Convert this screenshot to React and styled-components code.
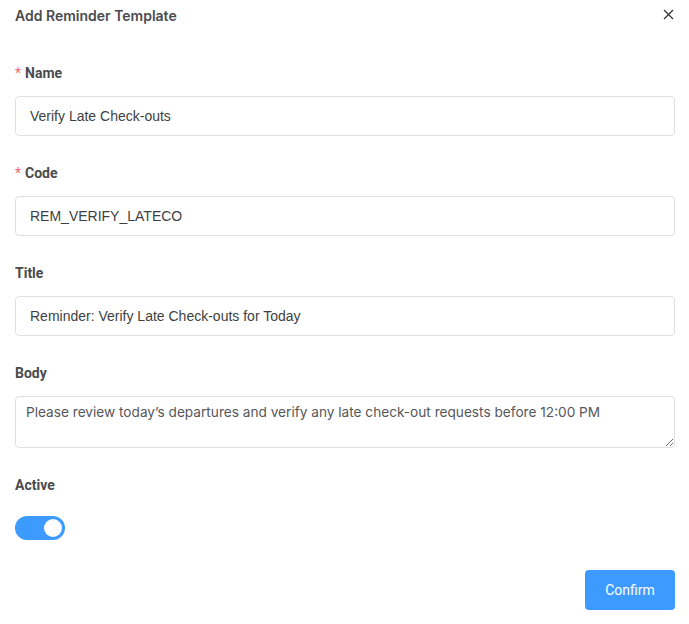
import React, { useState } from 'react'
import styled, { createGlobalStyle } from 'styled-components'

const GlobalStyle = createGlobalStyle`
  html, body {
    margin: 0;
    padding: 0;
    background: #fff;
  }
  body {
    font-family: Roboto, "Liberation Sans", Arial, sans-serif;
  }
`

const Dialog = styled.div`
  width: 689px;
  height: 624px;
  background: #fff;
  box-sizing: border-box;
`

const Header = styled.div`
  display: flex;
  align-items: center;
  justify-content: space-between;
  height: 31px;
  padding: 0 15px;
`

const Title = styled.span`
  font-family: Inter, "Liberation Sans", sans-serif;
  font-size: 14px;
  font-weight: 600;
  color: #4a4b4f;
`

const CloseBtn = styled.button`
  border: none;
  background: none;
  padding: 0;
  width: 16px;
  height: 16px;
  display: flex;
  align-items: center;
  justify-content: center;
  margin-right: -2px;
  margin-top: -3px;
  cursor: pointer;
`

const Body = styled.div`
  padding: 31px 14px 0 15px;
`

const Item = styled.div`
  margin-bottom: ${p => (p.$last ? '0' : '26px')};
`

const Label = styled.label`
  display: block;
  line-height: 22px;
  margin-bottom: 12px;
  font-size: 14px;
  font-weight: 700;
  color: #4a4b4d;
`

const Star = styled.span`
  color: #f56c6c;
  margin-right: 4px;
  font-weight: 400;
`

const Input = styled.input`
  display: block;
  width: 100%;
  box-sizing: border-box;
  height: 40px;
  padding: 0 14px;
  border: 1px solid #dcdfe6;
  border-radius: 4px;
  font-family: "Liberation Sans", Arial, sans-serif;
  font-size: 14px;
  color: #3d3f42;
  outline: none;
`

const TextArea = styled.textarea`
  display: block;
  width: 100%;
  box-sizing: border-box;
  height: 52px;
  padding: 5px 10px;
  border: 1px solid #dcdfe6;
  border-radius: 4px;
  font-family: Inter, "Liberation Sans", sans-serif;
  font-size: 13.65px;
  line-height: 20px;
  color: #55575b;
  resize: vertical;
  outline: none;
`

const SwitchRow = styled.div`
  height: 40px;
  display: flex;
  align-items: center;
`

const Switch = styled.button`
  position: relative;
  width: 50px;
  height: 24px;
  border-radius: 12px;
  border: none;
  padding: 0;
  background: ${p => (p.$on ? '#3d9bff' : '#dcdfe6')};
  cursor: pointer;
`

const Knob = styled.span`
  position: absolute;
  top: 3px;
  left: ${p => (p.$on ? '29px' : '3px')};
  width: 18px;
  height: 18px;
  border-radius: 50%;
  background: #fff;
`

const Footer = styled.div`
  display: flex;
  justify-content: flex-end;
  padding: 22px 14px 0 15px;
`

const Button = styled.button`
  width: 90px;
  height: 40px;
  border: none;
  border-radius: 4px;
  background: #3d9bff;
  color: #fff;
  font-family: Roboto, "Liberation Sans", Arial, sans-serif;
  font-size: 14px;
  cursor: pointer;
`

const Field = ({ label, required, last, children }) => (
  <Item $last={last}>
    <Label>
      {required && <Star>*</Star>}
      {label}
    </Label>
    {children}
  </Item>
)

export default function App() {
  const [active, setActive] = useState(true)

  return (
    <>
      <GlobalStyle />
      <Dialog>
        <Header>
          <Title>Add Reminder Template</Title>
          <CloseBtn aria-label="close">
            <svg width="11" height="11" viewBox="0 0 11 11">
              <path d="M1 1 L10 10 M10 1 L1 10" stroke="#303133" strokeWidth="1.2" fill="none" />
            </svg>
          </CloseBtn>
        </Header>
        <Body>
          <Field label="Name" required>
            <Input defaultValue="Verify Late Check-outs" />
          </Field>
          <Field label="Code" required>
            <Input defaultValue="REM_VERIFY_LATECO" />
          </Field>
          <Field label="Title">
            <Input defaultValue="Reminder: Verify Late Check-outs for Today" />
          </Field>
          <Field label="Body">
            <TextArea defaultValue="Please review today’s departures and verify any late check-out requests before 12:00 PM" />
          </Field>
          <Field label="Active" last>
            <SwitchRow>
              <Switch $on={active} onClick={() => setActive(!active)}>
                <Knob $on={active} />
              </Switch>
            </SwitchRow>
          </Field>
        </Body>
        <Footer>
          <Button>Confirm</Button>
        </Footer>
      </Dialog>
    </>
  )
}
